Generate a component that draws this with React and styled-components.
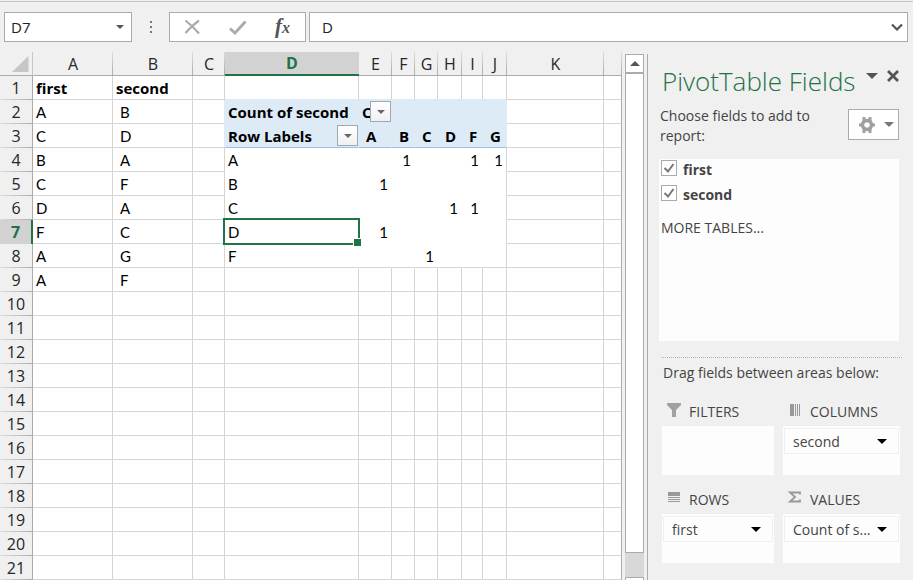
import React, { useState } from "react";
import styled, { createGlobalStyle } from "styled-components";

const columns = [
    { name: "A", width: 80 },
    { name: "B", width: 80 },
    { name: "C", width: 32 },
    { name: "D", width: 134 },
    { name: "E", width: 33 },
    { name: "F", width: 23 },
    { name: "G", width: 23 },
    { name: "H", width: 24 },
    { name: "I", width: 21 },
    { name: "J", width: 24 },
    { name: "K", width: 97 },
    { name: "" },
];

const cells = {
    A1: "first", B1: "second",
    A2: "A", B2: "B",
    A3: "C", B3: "D",
    A4: "B", B4: "A",
    A5: "C", B5: "F",
    A6: "D", B6: "A",
    A7: "F", B7: "C",
    A8: "A", B8: "G",
    A9: "A", B9: "F",
    D2: "Count of second", E2: "C",
    D3: "Row Labels", E3: "A", F3: "B", G3: "C", H3: "D", I3: "F", J3: "G",
    D4: "A", F4: 1, I4: 1, J4: 1,
    D5: "B", E5: 1,
    D6: "C", H6: 1, I6: 1,
    D7: "D", E7: 1,
    D8: "F", G8: 1,
};

const filterCells = { E2: "Column labels filter", D3: "Row labels filter" };
const rows = Array.from({ length: 21 }, (_, i) => i + 1);
const pivotColumns = "DEFGHIJ";

// where a cell sits relative to the pivot table (D2:J8)
const pivotPart = (col, row) => {
    if (!col) return "none";
    if (pivotColumns.includes(col)) {
        if (row === 1) return "above";
        if (row === 2) return "head";
        if (row === 3) return "headLast";
        if (row < 8) return col === "J" ? "bodyRight" : "body";
        if (row === 8) return col === "J" ? "none" : "bodyLast";
    }
    if (col === "C" && (row === 2 || row === 3)) return "beforeHead";
    return "none";
};

const Caret = ({ width = 10, height = 5, color = "#555" }) => (
    <svg width={width} height={height} viewBox="0 0 10 5" preserveAspectRatio="none" aria-hidden="true">
        <path d="M0 0h10L5 5z" fill={color} />
    </svg>
);

export default function App() {
    const [selected, setSelected] = useState({ col: "D", row: 7 });
    const [fields, setFields] = useState({ first: true, second: true });
    const address = `${selected.col}${selected.row}`;

    const toggleField = (name) => {
        setFields({ ...fields, [name]: !fields[name] });
    };

    return (
        <>
            <GlobalStyle />
            <Window>
                <FormulaBar>
                    <NameBox>
                        <input aria-label="Name box" value={address} readOnly />
                        <button aria-label="Show names"><Caret width={8} height={4} /></button>
                    </NameBox>
                    <Grip><i /><i /><i /></Grip>
                    <FormulaTools>
                        <button aria-label="Cancel">
                            <svg width="17" height="16" viewBox="0 0 17 16">
                                <path d="M1.500 1.500C6 5 11 10 15 14.500M15 1.500C10 5 5 10 1.500 14" stroke="#ababab" strokeWidth="2.200" fill="none" />
                            </svg>
                        </button>
                        <button aria-label="Enter">
                            <svg width="18" height="15" viewBox="0 0 18 15">
                                <path d="M1 8.500l5 4.500L16.500 1.500" stroke="#ababab" strokeWidth="2.800" fill="none" />
                            </svg>
                        </button>
                        <button aria-label="Insert function"><Fx>f<sub>x</sub></Fx></button>
                    </FormulaTools>
                    <FormulaInput>
                        <input aria-label="Formula" value={cells[address] ?? ""} readOnly />
                        <button aria-label="Expand formula bar">
                            <svg width="12" height="8" viewBox="0 0 12 8">
                                <path d="M1 1.500l5 5 5-5" stroke="#555" strokeWidth="2.200" fill="none" />
                            </svg>
                        </button>
                    </FormulaInput>
                </FormulaBar>
                <Workspace>
                    <Sheet>
                        <colgroup>
                            <col width={33} />
                            {columns.map((c, i) => <col key={i} width={c.width} />)}
                        </colgroup>
                        <thead>
                            <tr>
                                <Corner>
                                    <svg width="17" height="16" viewBox="0 0 17 16" aria-hidden="true">
                                        <path d="M16.500 0v16H0z" fill="#c6c6c6" />
                                    </svg>
                                </Corner>
                                {columns.map((c, i) => (
                                    <ColumnHead key={i} scope="col" $active={c.name === selected.col}>{c.name}</ColumnHead>
                                ))}
                            </tr>
                        </thead>
                        <tbody>
                            {rows.map((row) => (
                                <tr key={row}>
                                    <RowHead scope="row" $active={row === selected.row}>{row}</RowHead>
                                    {columns.map(({ name }, i) => {
                                        const id = `${name}${row}`;
                                        const value = name ? cells[id] : undefined;
                                        const isSelected = name && id === address;
                                        return (
                                            <Cell
                                                key={i}
                                                $part={pivotPart(name, row)}
                                                $bold={row === 1 || (pivotColumns.includes(name) && row < 4)}
                                                $number={typeof value === "number"}
                                                $indent={(name === "B" && row > 1) || (row === 3 && name > "D")}
                                                onClick={() => name && setSelected({ col: name, row })}
                                            >
                                                {value}
                                                {filterCells[id] && (
                                                    <FilterButton aria-label={filterCells[id]}><Caret width={8} height={4} color="#666" /></FilterButton>
                                                )}
                                                {isSelected && <Selection />}
                                            </Cell>
                                        );
                                    })}
                                </tr>
                            ))}
                        </tbody>
                    </Sheet>
                    <ScrollBar>
                        <ScrollButton aria-label="Scroll up">
                            <svg width="10" height="5" viewBox="0 0 10 5"><path d="M0 5h10L5 0z" fill="#555" /></svg>
                        </ScrollButton>
                        <Thumb />
                        <ScrollEnd />
                    </ScrollBar>
                    <Pane>
                        <PaneHeader>
                            <h2>PivotTable Fields</h2>
                            <button aria-label="Pane options"><Caret width={12} height={6} /></button>
                            <button aria-label="Close pane">
                                <svg width="12" height="12" viewBox="0 0 12 12">
                                    <path d="M1 1l10 10M11 1L1 11" stroke="#555" strokeWidth="2.800" />
                                </svg>
                            </button>
                        </PaneHeader>
                        <Chooser>
                            <p>Choose fields to add to report:</p>
                            <ToolsButton aria-label="Tools">
                                <svg width="16" height="16" viewBox="0 0 16 16">
                                    <circle cx="8" cy="8" r="4.500" fill="none" stroke="#a0a0a0" strokeWidth="3.400" />
                                    <path d="M3.500 0h3v3h3V0h3v4l1 2.500H16v3h-2.500l-1 2.500v4h-3v-3h-3v3h-3v-4l-1-2.500H0v-3h2.500l1-2.500zM8 5a3 3 0 1 0 0 6a3 3 0 1 0 0-6z" fillRule="evenodd" fill="#a0a0a0" />
                                </svg>
                                <Caret color="#777" />
                            </ToolsButton>
                        </Chooser>
                        <FieldList>
                            {Object.keys(fields).map((name) => (
                                <Field key={name}>
                                    <input type="checkbox" checked={fields[name]} onChange={() => toggleField(name)} />
                                    <svg width="16" height="16" viewBox="0 0 16 16" aria-hidden="true">
                                        <rect x=".5" y=".5" width="15" height="15" fill="#fff" stroke="#ababab" />
                                        {fields[name] && <path d="M3.500 8l3.500 3.500L12.500 4" stroke="#777" strokeWidth="2" fill="none" />}
                                    </svg>
                                    {name}
                                </Field>
                            ))}
                            <a href="#more">MORE TABLES...</a>
                        </FieldList>
                        <AreasTitle>Drag fields between areas below:</AreasTitle>
                        <Areas>
                            <Area>
                                <h3>
                                    <svg width="16" height="14" viewBox="0 0 16 14"><path d="M1 0h14v2l-5 5v7H6V7L1 2z" fill="#a0a0a0" /></svg>
                                    FILTERS
                                </h3>
                                <DropZone />
                            </Area>
                            <Area>
                                <h3>
                                    <svg width="16" height="14" viewBox="0 0 16 14">
                                        <path d="M3 1h4v12H3zM8 1h1v12H8zM10 1h1v12h-1zM12 1h1v12h-1z" fill="#999" />
                                    </svg>
                                    COLUMNS
                                </h3>
                                <DropZone><Chip><span>second</span><Caret color="#000" /></Chip></DropZone>
                            </Area>
                            <Area>
                                <h3>
                                    <svg width="16" height="14" viewBox="0 0 16 14">
                                        <path d="M2 1h12v4H2zM2 6h12v1H2zM2 8h12v1H2zM2 10h12v1H2z" fill="#999" />
                                    </svg>
                                    ROWS
                                </h3>
                                <DropZone><Chip><span>first</span><Caret color="#000" /></Chip></DropZone>
                            </Area>
                            <Area>
                                <h3>
                                    <svg width="16" height="14" viewBox="0 0 16 14">
                                        <path d="M13 3.500V1.500H3L8 6 3 10.500h10V8.500" stroke="#999" strokeWidth="1.800" fill="none" />
                                    </svg>
                                    VALUES
                                </h3>
                                <DropZone><Chip title="Count of second"><span>Count of s...</span><Caret color="#000" /></Chip></DropZone>
                            </Area>
                        </Areas>
                    </Pane>
                </Workspace>
            </Window>
        </>
    );
}

const GlobalStyle = createGlobalStyle`
  * {
    box-sizing: border-box;
  }

  body {
    margin: 0;
    background-color: #f0f0f0;
    color: #444;
    font-family: "Open Sans", "Noto Sans", sans-serif;
    font-size: 14px;
  }

  button {
    display: flex;
    align-items: center;
    justify-content: center;
    padding: 0;
    border: none;
    background: none;
    cursor: pointer;
  }

  input {
    min-width: 0;
    border: none;
    outline: none;
    padding: 0;
    background: none;
    color: #222;
    font: inherit;
    font-size: 15px;
  }

  h2, h3, p {
    margin: 0;
    font-weight: 400;
  }
`;

const Window = styled.div`
  display: flex;
  flex-direction: column;
  min-height: 100vh;
  padding-top: 1px;
`;

const FormulaBar = styled.div`
  display: flex;
  border-top: 1px solid #c6c6c6;
  padding: 10px 5px 10px 4px;
`;

const Box = styled.div`
  display: flex;
  align-items: center;
  height: 30px;
  background-color: #fff;
  border: 1px solid #ababab;
`;

const NameBox = styled(Box)`
  width: 128px;
  padding: 0 7px 0 6px;

  input {
    flex: 1;
  }
`;

const Grip = styled.div`
  display: flex;
  flex-direction: column;
  align-items: center;
  justify-content: center;
  gap: 3px;
  width: 37px;

  i {
    width: 2px;
    height: 2px;
    background-color: #777;
  }
`;

const FormulaTools = styled(Box)`
  width: 137px;
  margin-right: 3px;

  button {
    flex: 1;
  }
`;

const Fx = styled.span`
  color: #555;
  font: italic bold 21px "Liberation Serif", serif;
  line-height: 24px;

  sub {
    font-size: 16px;
    vertical-align: baseline;
  }
`;

const FormulaInput = styled(Box)`
  flex: 1;
  padding: 0 4px 0 12px;

  input {
    flex: 1;
  }
`;

const Workspace = styled.div`
  display: flex;
  flex: 1;
`;

const Sheet = styled.table`
  flex: 1;
  width: 0;
  min-width: 0;
  table-layout: fixed;
  border-spacing: 0;
  margin-right: 3px;
  color: #000;
  font-family: Lato, "Open Sans", sans-serif;
  font-size: 15px;

  th, td {
    height: 24px;
    padding: 0;
    line-height: 22px;
    white-space: nowrap;
  }
`;

const Corner = styled.td`
  border-right: 1px solid #c6c6c6;
  border-bottom: 1px solid #ababab;

  svg {
    display: block;
    margin: 3px 3px 2px auto;
  }
`;

const ColumnHead = styled.th`
  background: ${({ $active }) => ($active
        ? "#d2d2d2"
        : "linear-gradient(#dcdcdc, #ababab) right / 1px 100% no-repeat")};
  border-bottom: ${({ $active }) => ($active ? "2px solid #217346" : "1px solid #ababab")};
  color: ${({ $active }) => ($active ? "#217346" : "#262626")};
  font-family: "Open Sans", sans-serif;
  font-size: 16px;
  font-weight: ${({ $active }) => ($active ? 700 : 400)};
`;

const RowHead = styled.th`
  background: ${({ $active }) => ($active
        ? "#d2d2d2"
        : "linear-gradient(to right, #dcdcdc, #ababab) bottom / 100% 1px no-repeat")};
  border-right: ${({ $active }) => ($active ? "2px solid #217346" : "1px solid #ababab")};
  color: ${({ $active }) => ($active ? "#217346" : "#262626")};
  font-family: "Open Sans", sans-serif;
  font-size: 16px;
  font-weight: ${({ $active }) => ($active ? 700 : 400)};
`;

const partColors = {
    none: ["#fff", "#d4d4d4", "#d4d4d4"],
    above: ["#fff", "#d4d4d4", "#ddebf7"],
    beforeHead: ["#fff", "#ddebf7", "#d4d4d4"],
    head: ["#ddebf7", "#ddebf7", "#ddebf7"],
    headLast: ["#ddebf7", "#ddebf7", "#9bc2e6"],
    body: ["#fff", "#fff", "#fff"],
    bodyRight: ["#fff", "#d4d4d4", "#fff"],
    bodyLast: ["#fff", "#fff", "#d4d4d4"],
};

const Cell = styled.td`
  position: relative;
  background-color: ${({ $part }) => partColors[$part][0]};
  border-right: 1px solid ${({ $part }) => partColors[$part][1]};
  border-bottom: 1px solid ${({ $part }) => partColors[$part][2]};
  font-family: ${({ $bold }) => ($bold ? '"Open Sans", sans-serif' : "inherit")};
  font-weight: ${({ $bold }) => ($bold ? 700 : 400)};
  text-align: ${({ $number }) => ($number ? "right" : "left")};

  && {
    padding: 0 3px 0 ${({ $indent }) => ($indent ? 7 : 3)}px;
  }

  &:last-child {
    border-right-color: #ababab;
  }
`;

const FilterButton = styled.button`
  position: absolute;
  top: 1px;
  right: 0;
  width: 21px;
  height: 21px;
  border: 1px solid #a0a8b0;
  background: linear-gradient(#fff, #f0f0f4);
`;

const Selection = styled.div`
  position: absolute;
  z-index: 1;
  inset: -2px;
  border: 2px solid #217346;

  &::after {
    content: "";
    position: absolute;
    right: -4px;
    bottom: -4px;
    width: 7px;
    height: 7px;
    border: 1px solid #fff;
    background-color: #217346;
  }
`;

const ScrollBar = styled.div`
  display: flex;
  flex-direction: column;
  width: 19px;
  margin: 2px 3px 0 0;
  background-color: #d8d8d8;
`;

const ScrollButton = styled.button`
  height: 19px;
  border: 1px solid #ababab;
  background-color: #fff;
`;

const Thumb = styled.div`
  flex: 1;
  margin-bottom: 24px;
  border: 1px solid #ababab;
  background-color: #fff;
`;

const ScrollEnd = styled.div`
  height: 3px;
  border: 1px solid #ababab;
  border-bottom: none;
  background-color: #fff;
`;

const Pane = styled.aside`
  width: 266px;
  margin-top: 2px;
  padding: 8px 14px 0 11px;
  border-left: 1px solid #ababab;
`;

const PaneHeader = styled.header`
  display: flex;
  align-items: flex-start;

  h2 {
    flex: 1;
    padding-left: 3px;
    color: #217346;
    font-size: 26px;
    font-weight: 300;
    line-height: 38px;
    white-space: nowrap;
  }

  button {
    height: 12px;
    margin: 8px 0 0 9px;
  }
`;

const Chooser = styled.div`
  display: flex;
  justify-content: space-between;
  margin: 6px 0 13px 1px;
  line-height: 20px;

  p {
    width: 170px;
  }
`;

const ToolsButton = styled.button`
  justify-content: space-between;
  width: 51px;
  height: 31px;
  margin-top: 3px;
  padding: 0 4px 0 10px;
  border: 1px solid #ababab;
  background-color: #fff;
`;

const FieldList = styled.div`
  display: flex;
  flex-direction: column;
  height: 182px;
  padding: 0 2px;
  background-color: #fdfdfd;

  a {
    margin-top: 7px;
    color: #444;
    line-height: 24px;
    text-decoration: none;
  }
`;

const Field = styled.label`
  display: flex;
  align-items: flex-start;
  height: 25px;
  font-weight: 700;
  line-height: 22px;

  input {
    position: absolute;
    opacity: 0;
  }

  svg {
    margin: 1px 6px 0 0;
  }
`;

const AreasTitle = styled.p`
  margin: 16px -3px 0 2px;
  padding: 5px 0 0 2px;
  border-top: 1px dotted #b4b4b4;
  line-height: 20px;
`;

const Areas = styled.div`
  display: grid;
  grid-template-columns: 112fr 117fr;
  gap: 9px;
  margin: 13px -1px 0 3px;
`;

const Area = styled.section`
  min-width: 0;

  h3 {
    display: flex;
    align-items: center;
    gap: 7px;
    height: 30px;
    padding: 0 0 0 4px;
    font-size: 14px;
  }

  h3 svg {
    margin-bottom: 2px;
  }
`;

const DropZone = styled.div`
  height: 49px;
  padding: 2px 1px;
  background-color: #fdfdfd;
`;

const Chip = styled.button`
  width: 100%;
  height: 26px;
  padding: 0 11px 0 8px;
  border: 1px solid #f0f0f0;
  color: #444;
  font: inherit;

  span {
    flex: 1;
    text-align: left;
    white-space: nowrap;
  }
`;
